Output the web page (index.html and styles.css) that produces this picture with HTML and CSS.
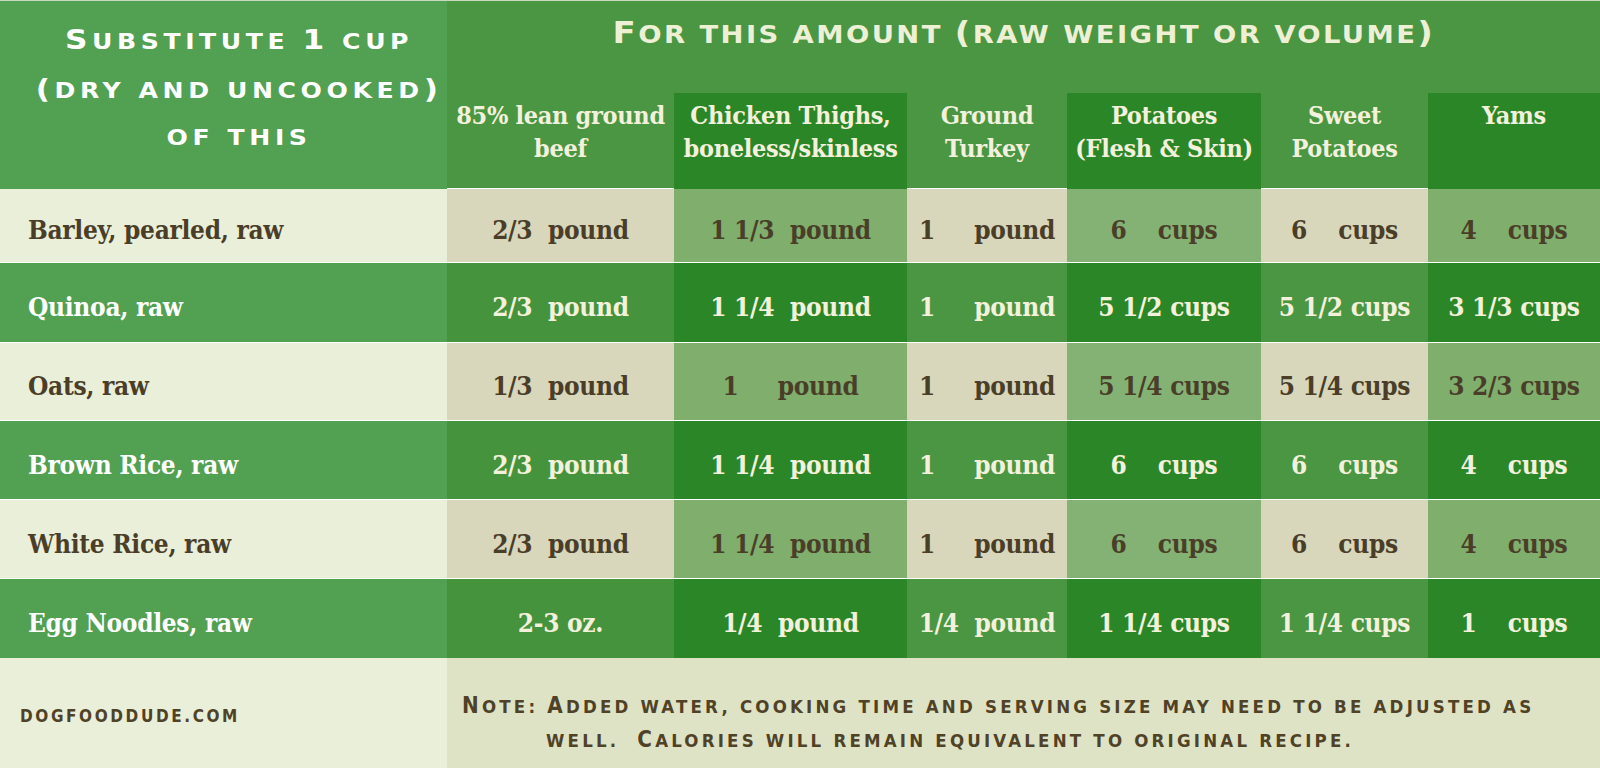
FILE: index.html
```html
<!DOCTYPE html>
<html>
<head>
<meta charset="utf-8">
<link rel="stylesheet" href="styles.css">
</head>
<body>
<div class="chart">
  <div class="head">
    <div class="sub-title">
      <div class="tl"><span class="ini">S</span>ubstitute <span class="ini">1</span> cup</div>
      <div class="tl"><span class="ini">(</span>dry and uncooked<span class="ini">)</span></div>
      <div class="tl">of this</div>
    </div>
    <div class="amount-title"><span class="stretch"><span class="ini">F</span>or this amount <span class="ini">(</span>raw weight or volume<span class="ini">)</span></span></div>
    <div class="ch c-beef">85% lean ground<br>beef</div>
    <div class="ch c-chick">Chicken Thighs,<br>boneless/skinless</div>
    <div class="ch c-turk">Ground<br>Turkey</div>
    <div class="ch c-pot">Potatoes<br>(Flesh &amp; Skin)</div>
    <div class="ch c-sweet">Sweet<br>Potatoes</div>
    <div class="ch c-yam">Yams</div>
  </div>

  <div class="row light r1">
    <div class="cell name">Barley, pearled, raw</div>
    <div class="cell v-beef">2/3  pound</div>
    <div class="cell v-chick">1 1/3  pound</div>
    <div class="cell v-turk">1     pound</div>
    <div class="cell v-pot">6    cups</div>
    <div class="cell v-sweet">6    cups</div>
    <div class="cell v-yam">4    cups</div>
  </div>
  <div class="row green r2">
    <div class="cell name">Quinoa, raw</div>
    <div class="cell v-beef">2/3  pound</div>
    <div class="cell v-chick">1 1/4  pound</div>
    <div class="cell v-turk">1     pound</div>
    <div class="cell v-pot">5 1/2 cups</div>
    <div class="cell v-sweet">5 1/2 cups</div>
    <div class="cell v-yam">3 1/3 cups</div>
  </div>
  <div class="row light r3">
    <div class="cell name">Oats, raw</div>
    <div class="cell v-beef">1/3  pound</div>
    <div class="cell v-chick">1     pound</div>
    <div class="cell v-turk">1     pound</div>
    <div class="cell v-pot">5 1/4 cups</div>
    <div class="cell v-sweet">5 1/4 cups</div>
    <div class="cell v-yam">3 2/3 cups</div>
  </div>
  <div class="row green r4">
    <div class="cell name">Brown Rice, raw</div>
    <div class="cell v-beef">2/3  pound</div>
    <div class="cell v-chick">1 1/4  pound</div>
    <div class="cell v-turk">1     pound</div>
    <div class="cell v-pot">6    cups</div>
    <div class="cell v-sweet">6    cups</div>
    <div class="cell v-yam">4    cups</div>
  </div>
  <div class="row light r5">
    <div class="cell name">White Rice, raw</div>
    <div class="cell v-beef">2/3  pound</div>
    <div class="cell v-chick">1 1/4  pound</div>
    <div class="cell v-turk">1     pound</div>
    <div class="cell v-pot">6    cups</div>
    <div class="cell v-sweet">6    cups</div>
    <div class="cell v-yam">4    cups</div>
  </div>
  <div class="row green r6">
    <div class="cell name">Egg Noodles, raw</div>
    <div class="cell v-beef">2-3 oz.</div>
    <div class="cell v-chick">1/4  pound</div>
    <div class="cell v-turk">1/4  pound</div>
    <div class="cell v-pot">1 1/4 cups</div>
    <div class="cell v-sweet">1 1/4 cups</div>
    <div class="cell v-yam">1    cups</div>
  </div>

  <div class="foot">
    <div class="site">dogfooddude.com</div>
    <div class="note">
      <div class="nl nl1"><span class="ini">N</span>ote: <span class="ini">A</span>dded water, cooking time and serving size may need to be adjusted as</div>
      <div class="nl nl2">well.  <span class="ini">C</span>alories will remain equivalent to original recipe.</div>
    </div>
  </div>
</div>
</body>
</html>
```

FILE: styles.css
```css
html, body {
  margin: 0;
  padding: 0;
  background: #ffffff;
}

.chart {
  width: 1600px;
  height: 768px;
  overflow: hidden;
  font-family: "DejaVu Serif Condensed", "DejaVu Serif", serif;
  font-stretch: condensed;
}

.head,
.row,
.foot {
  display: grid;
  grid-template-columns: 447px 227px 233px 160px 194px 167px 172px;
}

/* ---------- header ---------- */
.head {
  grid-template-rows: 92px 96px;
  background: #4a9642;
  border-top: 1px solid #c9d9c0;
  box-sizing: border-box;
  height: 188px;
}

.sub-title {
  grid-row: 1 / 3;
  grid-column: 1;
  background: #52a052;
  color: #ffffff;
  font-family: "DejaVu Sans", sans-serif;
  font-weight: bold;
  text-transform: uppercase;
  font-size: 22px;
  letter-spacing: 3.6px;
  padding: 15px 0 0 32px;
  display: flex;
  flex-direction: column;
  align-items: center;
}

.tl {
  line-height: 47px;
  transform: scaleX(1.27);
  white-space: nowrap;
}

.ini {
  font-size: 1.24em;
}

.amount-title {
  grid-row: 1;
  grid-column: 2 / 8;
  color: #eef0d6;
  font-family: "DejaVu Sans", sans-serif;
  font-weight: bold;
  text-transform: uppercase;
  font-size: 24px;
  letter-spacing: 1.9px;
  text-align: center;
  line-height: 40px;
  padding-top: 12px;
  white-space: nowrap;
}

.stretch {
  display: inline-block;
  transform: scaleX(1.27);
}

.ch {
  grid-row: 2;
  color: #f3f1dc;
  font-size: 25px;
  font-weight: bold;
  line-height: 33px;
  text-align: center;
  padding-top: 6px;
  white-space: nowrap;
  letter-spacing: -0.3px;
}

.c-chick,
.c-pot,
.c-yam {
  background: #2b8628;
}

/* ---------- body rows ---------- */
.row {
  box-sizing: border-box;
  border-top: 1px solid rgba(255, 255, 255, 0.28);
}

.r1 { height: 74px; }
.r2 { height: 80px; }
.r3 { height: 78px; }
.r4 { height: 79px; }
.r5 { height: 79px; }
.r6 { height: 80px; }

.cell {
  display: flex;
  align-items: center;
  justify-content: center;
  padding-top: 9px;
  font-size: 26px;
  font-weight: bold;
  white-space: pre;
  letter-spacing: -0.3px;
}

.cell.name {
  justify-content: flex-start;
  padding-left: 28px;
}

.light .cell { color: #4a3e29; }
.light .name { background: #eaefd9; }
.light .v-beef { background: #d9d7bb; }
.light .v-chick { background: #7fae6d; }
.light .v-turk { background: #d9d7bb; }
.light .v-pot { background: #84b274; }
.light .v-sweet { background: #d9d7bb; }
.light .v-yam { background: #7fae6d; }

.green .cell { color: #f3f1dc; }
.green .name { background: #52a052; color: #ffffff; }
.green .v-beef { background: #46933e; }
.green .v-chick { background: #2b8628; }
.green .v-turk { background: #4a9642; }
.green .v-pot { background: #2b8628; }
.green .v-sweet { background: #4a9642; }
.green .v-yam { background: #2b8628; }

/* ---------- footer ---------- */
.foot {
  height: 110px;
  font-family: "DejaVu Sans", sans-serif;
  font-weight: bold;
  text-transform: uppercase;
  color: #4f4226;
}

.site {
  grid-column: 1;
  background: #eaefd9;
  padding: 42px 0 0 20px;
  line-height: 32px;
  font-size: 17px;
  letter-spacing: 2.6px;
}

.note {
  grid-column: 2 / 8;
  background: #dfe3c6;
  padding: 31px 0 0 15px;
  line-height: 32px;
  font-size: 18.5px;
  letter-spacing: 3.2px;
}

.nl {
  white-space: pre;
}

.note .ini {
  font-size: 1.2em;
}

.nl2 {
  padding-left: 84px;
}
```
